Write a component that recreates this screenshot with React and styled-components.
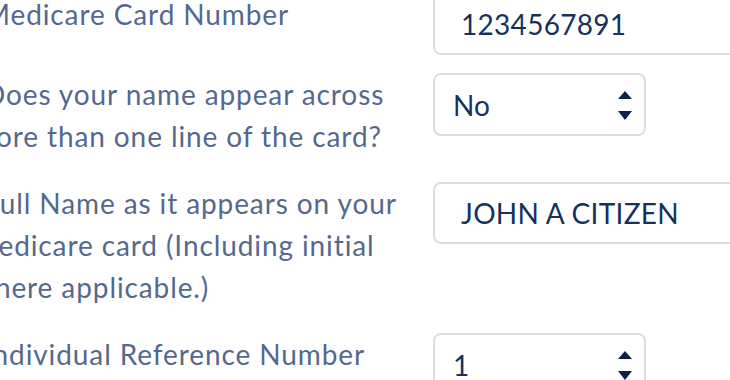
import React from 'react';
import styled, { createGlobalStyle } from 'styled-components';

const GlobalStyle = createGlobalStyle`
  html, body {
    margin: 0;
    padding: 0;
    background: #ffffff;
    overflow: hidden;
  }
  body {
    font-family: Lato, "Open Sans", sans-serif;
  }
`;

const Form = styled.div`
  display: flex;
  flex-direction: column;
  gap: 18px;
  margin-top: -7px;
  margin-left: -28px;
  width: 920px;
`;

const Row = styled.div`
  display: flex;
  flex-flow: row nowrap;
  align-items: flex-start;
  gap: 23px;
`;

const Label = styled.label`
  width: 438px;
  flex-shrink: 0;
  padding-bottom: 7px;
  font-size: 28px;
  line-height: 42px;
  letter-spacing: 0.9px;
  color: #54698d;
`;

// required marker sits just left of the visible area
const Required = styled.abbr`
  display: inline-block;
  width: 12px;
  color: #c23934;
  text-decoration: none;
  border: 0;
`;

const TextInput = styled.input`
  box-sizing: border-box;
  width: 420px;
  height: 62px;
  padding: 0 26px;
  border: 2px solid #d8dde6;
  border-radius: 8px;
  background: #fff;
  font-family: Lato, "Open Sans", sans-serif;
  font-size: 28px;
  letter-spacing: 0.3px;
  color: #16325c;
  outline: none;
`;

const SelectWrap = styled.div`
  position: relative;
  width: 213px;
  height: 63px;
`;

const Select = styled.select`
  box-sizing: border-box;
  width: 100%;
  height: 100%;
  padding: 0 40px 0 18px;
  border: 2px solid #d8dde6;
  border-radius: 8px;
  background: #fff;
  appearance: none;
  font-family: Lato, "Open Sans", sans-serif;
  font-size: 28px;
  color: #16325c;
  outline: none;
`;

const Arrows = styled.svg`
  position: absolute;
  right: 14px;
  top: 50%;
  width: 14px;
  height: 30px;
  margin-top: -14px;
  pointer-events: none;
`;

const SelectField = ({ value, options }) => (
  <SelectWrap>
    <Select defaultValue={value}>
      {options.map((o) => (
        <option key={o} value={o}>{o}</option>
      ))}
    </Select>
    <Arrows viewBox="0 0 14 30">
      <polygon points="7,0 14,8 0,8" fill="#0b2347" />
      <polygon points="0,20 14,20 7,29" fill="#0b2347" />
    </Arrows>
  </SelectWrap>
);

const Field = ({ label, children }) => (
  <Row>
    <Label>
      <Required title="required">*</Required>
      {label}
    </Label>
    {children}
  </Row>
);

const App = () => (
  <>
    <GlobalStyle />
    <Form>
      <Field label="Medicare Card Number">
        <TextInput defaultValue="1234567891" />
      </Field>
      <Field label="Does your name appear across more than one line of the card?">
        <SelectField value="No" options={['Yes', 'No']} />
      </Field>
      <Field label="Full Name as it appears on your Medicare card (Including initial where applicable.)">
        <TextInput defaultValue="JOHN A CITIZEN" />
      </Field>
      <Field label="Individual Reference Number">
        <SelectField value="1" options={['1', '2', '3', '4', '5', '6', '7', '8', '9']} />
      </Field>
    </Form>
  </>
);

export default App;
